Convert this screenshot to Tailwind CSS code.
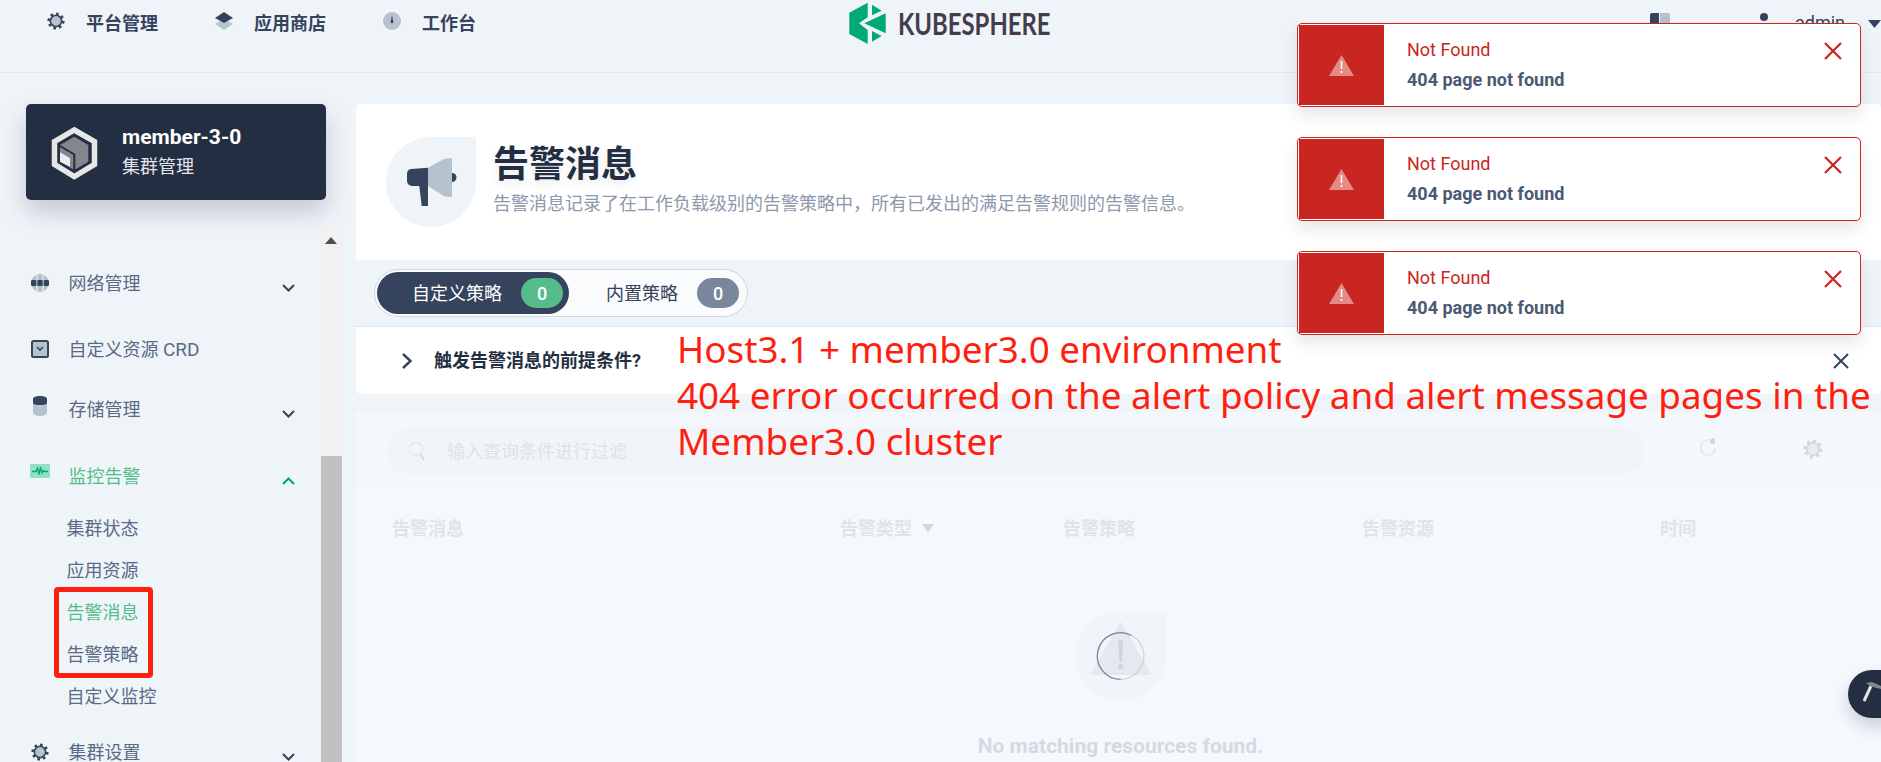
<!DOCTYPE html>
<html lang="zh">
<head>
<meta charset="utf-8">
<script src="https://cdn.jsdelivr.net/npm/@tailwindcss/browser@4"></script>
<title>告警消息</title>
</head>
<body class="font-['Roboto','Noto_Sans_CJK_SC',sans-serif]">
<div class="relative w-[1881px] h-[762px] overflow-hidden bg-[#eff4f9] text-[#36435c]">

  <!-- top nav -->
  <header class="relative h-[73px] border-b border-[#e3e9ef]">
    <nav class="flex pl-[47px] pt-[12px] font-bold text-[18px] leading-[24px]">
      <a class="flex w-[168px]">
        <svg class="w-[18px] h-[18px]" viewBox="0 0 18 18"><circle cx="9" cy="9" r="4.5" fill="#b6c2cd"/><circle cx="9" cy="9" r="5.6" fill="none" stroke="#36435c" stroke-width="1.8"/><circle cx="9" cy="9" r="7.3" fill="none" stroke="#36435c" stroke-width="2.6" stroke-dasharray="2.6 3.1"/></svg>
        <span class="ml-[21px] h-[24px]">平台管理</span>
      </a>
      <a class="flex w-[168px]">
        <svg class="w-[18px] h-[18px]" viewBox="0 0 18 18"><path d="M9 7 18 12 9 18 0 12Z" fill="#b6c2cd"/><path d="M9 0 18 6 9 11 0 6Z" fill="#36435c"/></svg>
        <span class="ml-[21px]">应用商店</span>
      </a>
      <a class="flex">
        <svg class="w-[18px] h-[18px]" viewBox="0 0 18 18"><circle cx="9" cy="9" r="9" fill="#b6c2cd"/><path d="M9 3.2 10.2 9.5a1.3 1.3 0 1 1-2.4 0Z" fill="#36435c"/></svg>
        <span class="ml-[21px]">工作台</span>
      </a>
    </nav>

    <!-- logo -->
    <div class="absolute left-[849px] top-[2px] flex items-center">
      <svg class="w-[37px] h-[42px]" viewBox="0 0 37 42"><path d="M18.700.7.3 10.700V32L18.700 42V28L10 21.300 18.700 15.300Z" fill="#00aa72"/><path d="M23 2.700 32.700 8.700 23 13.300Z M36.700 11.300V31.300L15.300 21.300Z M23 29 32.700 34 23 39.700Z" fill="#00aa72"/></svg>
      <span class="ml-[12px] font-['Lato',sans-serif] font-bold text-[31px] leading-[42px] text-[#453c4d] origin-left scale-x-[0.77] inline-block">KUBESPHERE</span>
    </div>

    <!-- right tools -->
    <div class="absolute left-[1650px] top-[13px] flex">
      <div class="w-[9px] h-[20px] bg-[#36435c] rounded-tl-[2px]"></div>
      <div class="w-[10px] h-[20px] bg-[#b6c2cd] ml-[1px] rounded-tr-[2px]"></div>
    </div>
    <div class="absolute left-[1760px] top-[13px] w-[8px] h-[8px] rounded-full bg-[#36435c]"></div>
    <span class="absolute left-[1795px] top-[11px] text-[18px] leading-[24px]">admin</span>
    <svg class="absolute left-[1868px] top-[20px] w-[13px] h-[8px]" viewBox="0 0 13 8"><path d="M0 0H13L6.500 8Z" fill="#36435c"/></svg>
  </header>

  <div class="flex">
    <!-- sidebar -->
    <aside class="relative w-[356px] h-[689px] shrink-0">
      <div class="ml-[26px] mt-[31px] w-[300px] h-[96px] rounded-[5px] bg-[#242e42] shadow-[0_12px_24px_rgba(36,46,66,0.22)] flex items-start pl-[25px] text-white">
        <svg class="w-[47px] h-[53px] mt-[23px]" viewBox="0 0 47 53"><path d="M23.300 3 43.500 14.600V37.400L23.300 49.500 3.500 37.400V14.600Z" fill="none" stroke="#e6e6e6" stroke-width="5.500"/><path d="M23.300 9.700 37.300 18V34.700L23.300 43 9 34.700V18Z" fill="#82868f"/><path d="M9 25.300 19 31.300V39.700L9 34.700Z" fill="#eee"/><path d="M9 19 23.300 27.500V43" fill="none" stroke="#242e42" stroke-width="2"/></svg>
        <div class="ml-[24px] mt-[19px]">
          <div class="font-bold text-[21px] leading-[28px]">member-3-0</div>
          <div class="text-[18px] leading-[24px] mt-[4px] text-[#e4e6ea]">集群管理</div>
        </div>
      </div>

      <!-- scrollbar -->
      <div class="absolute left-[320px] top-[157px] bottom-0 w-[23px] bg-[#f1f1f1]">
        <svg class="absolute left-[5px] top-[7px] w-[12px] h-[7px]" viewBox="0 0 12 7"><path d="M0 7 6 0 12 7Z" fill="#505050"/></svg>
        <div class="absolute left-[1px] right-[1px] top-[226px] bottom-0 bg-[#c1c1c1]"></div>
      </div>

      <!-- menu -->
      <ul class="absolute left-0 top-[190px] w-[320px] text-[18px] leading-[42px] text-[#5a6a86]">
        <li class="relative flex h-[42px] pl-[68.500px]">
          <svg class="absolute left-[31px] top-[11px] w-[18px] h-[18px]" viewBox="0 0 18 18"><circle cx="9" cy="9" r="9" fill="#b6c2cd"/><path d="M6 0V18M12 0V18" stroke="#eff4f9" stroke-width="1"/><path d="M0 6H18V12H0Z" fill="#eff4f9"/><rect y="6" width="5.500" height="6" rx="1" fill="#36435c"/><rect x="6.300" y="6" width="5.400" height="6" fill="#36435c"/><rect x="12.500" y="6" width="5.500" height="6" rx="1" fill="#36435c"/></svg>
          <span>网络管理</span>
          <svg class="absolute left-[282px] top-[21px] w-[13px] h-[8px]" viewBox="0 0 13 8"><path d="M1 1 6.500 6.500 12 1" fill="none" stroke="#36435c" stroke-width="2"/></svg>
        </li>
        <li class="relative flex h-[42px] pl-[68.500px] mt-[24px]">
          <svg class="absolute left-[31px] top-[11px] w-[18px] h-[18px]" viewBox="0 0 18 18"><rect x="1" y="1" width="16" height="16" rx="1.500" fill="#b6c2cd" stroke="#36435c" stroke-width="2"/><path d="M6 7 9 10 12 7" fill="none" stroke="#36435c" stroke-width="1.600"/></svg>
          <span>自定义资源 <span class="text-[19px]">CRD</span></span>
        </li>
        <li class="relative flex h-[42px] pl-[68.500px] mt-[18px]">
          <svg class="absolute left-[33px] top-[7px] w-[14px] h-[20px]" viewBox="0 0 14 20"><path d="M0 4H14V17C14 19 10 20 7 20S0 19 0 17Z" fill="#b6c2cd"/><path d="M0 3C0 1 3 0 7 0S14 1 14 3V7C14 8.500 11 9 7 9S0 8.500 0 7Z" fill="#36435c"/></svg>
          <span>存储管理</span>
          <svg class="absolute left-[282px] top-[21px] w-[13px] h-[8px]" viewBox="0 0 13 8"><path d="M1 1 6.500 6.500 12 1" fill="none" stroke="#36435c" stroke-width="2"/></svg>
        </li>
        <li class="relative flex h-[42px] pl-[68.500px] mt-[25px] text-[#55bc8a]">
          <svg class="absolute left-[30px] top-[8px] w-[20px] h-[14px]" viewBox="0 0 20 14"><rect width="20" height="14" rx="1.500" fill="#90e0c5"/><path d="M2 7.500H6L7.500 4 9 10.500 10.500 3 12 9 13.500 6.500 14.500 7.500H18" fill="none" stroke="#00aa72" stroke-width="1.300"/></svg>
          <span>监控告警</span>
          <svg class="absolute left-[282px] top-[21px] w-[13px] h-[8px]" viewBox="0 0 13 8"><path d="M1 7 6.500 1.500 12 7" fill="none" stroke="#00aa72" stroke-width="2"/></svg>
        </li>
        <li class="h-[42px] pl-[66.500px] mt-[10px]">集群状态</li>
        <li class="h-[42px] pl-[66.500px]">应用资源</li>
        <li class="h-[42px] pl-[66.500px] text-[#55bc8a]">告警消息</li>
        <li class="h-[42px] pl-[66.500px]">告警策略</li>
        <li class="h-[42px] pl-[66.500px]">自定义监控</li>
        <li class="relative flex h-[42px] pl-[68.500px] mt-[14px]">
          <svg class="absolute left-[31px] top-[11px] w-[18px] h-[18px]" viewBox="0 0 18 18"><circle cx="9" cy="9" r="4.500" fill="#b6c2cd"/><circle cx="9" cy="9" r="5.600" fill="none" stroke="#36435c" stroke-width="1.800"/><circle cx="9" cy="9" r="7.300" fill="none" stroke="#36435c" stroke-width="2.600" stroke-dasharray="2.600 3.100"/></svg>
          <span>集群设置</span>
          <svg class="absolute left-[282px] top-[21px] w-[13px] h-[8px]" viewBox="0 0 13 8"><path d="M1 1 6.500 6.500 12 1" fill="none" stroke="#36435c" stroke-width="2"/></svg>
        </li>
      </ul>
    </aside>

    <!-- main -->
    <main class="flex-1 min-w-0 pt-[31px]">
      <section class="h-[156px] bg-white rounded-t-[5px] flex items-start pl-[30px] pt-[33px]">
        <div class="w-[90px] h-[90px] rounded-full rounded-tr-none bg-[#eff4f9] flex items-center justify-center">
          <svg class="w-[90px] h-[90px]" viewBox="0 0 90 90"><path d="M66 36a4.500 4.500 0 0 1 0 9Z" fill="#36435c"/><path d="M42 30.700 58 22q3-.7 8-.7V60q-5 0-8-.7L42 49Z" fill="#b6c2cd"/><path d="M42 30.700V69H35.700L33.300 49H26a5 5 0 0 1-5-5V37a5 5 0 0 1 4-5Z" fill="#36435c"/></svg>
        </div>
        <div class="ml-[17px]">
          <h1 class="font-bold text-[36px] leading-[46px] text-[#242e42] mt-[5px] [text-shadow:0_4px_8px_rgba(36,46,66,0.1)]">告警消息</h1>
          <p class="text-[18px] leading-[24px] mt-[4px] text-[#8c98ad]">告警消息记录了在工作负载级别的告警策略中，所有已发出的满足告警规则的告警信息。</p>
        </div>
      </section>

      <div class="h-[67px] pl-[18px] pt-[9px] border-b border-[#dfe6ee]">
        <div class="w-[374px] h-[48px] rounded-full border border-[#cfd6e0] bg-[#f9fbfd] p-[2px] flex text-[18px]">
          <div class="w-[192px] h-[42px] rounded-full bg-[#36435c] text-white flex items-center pl-[35px]">
            <span>自定义策略</span>
            <span class="ml-[19px] w-[42px] h-[30px] rounded-full bg-[#55bc8a] flex items-center justify-center font-medium">0</span>
          </div>
          <div class="h-[42px] flex items-center pl-[37px]">
            <span>内置策略</span>
            <span class="ml-[19px] w-[42px] h-[30px] rounded-full bg-[#79879c] text-white flex items-center justify-center font-medium">0</span>
          </div>
        </div>
      </div>

      <section class="relative h-[67px] bg-white rounded-b-[5px] flex items-center pl-[45px]">
        <svg class="w-[12px] h-[18px]" viewBox="0 0 12 18"><path d="M2 2 9.500 9 2 16" fill="none" stroke="#36435c" stroke-width="2.400"/></svg>
        <span class="ml-[21px] font-bold text-[18px] text-[#242e42]">触发告警消息的前提条件?</span>
        <svg class="absolute left-[1476px] top-[25px] w-[18px] h-[18px]" viewBox="0 0 18 18"><path d="M2 2 16 16M16 2 2 16" stroke="#36435c" stroke-width="2"/></svg>
      </section>

      <section class="mt-[18px] h-[350px] bg-[#f5f8fd] rounded-t-[5px]">
        <div class="h-[78px] bg-[#f4f7fb] pl-[31px] pr-[237px] pt-[15px] relative">
          <div class="h-[48px] rounded-full bg-[#f1f5f9] flex items-center pl-[20px] text-[18px] text-[#dde2ea]">
            <svg class="w-[20px] h-[22px]" viewBox="0 0 20 22"><circle cx="9" cy="9" r="6.500" fill="none" stroke="#e5e9ef" stroke-width="1.600"/><path d="M13.500 14 17 20" stroke="#d5dbe3" stroke-width="2"/></svg>
            <span class="ml-[20px]">输入查询条件进行过滤</span>
          </div>
          <svg class="absolute left-[1342px] top-[26px] w-[20px] h-[20px]" viewBox="0 0 20 20"><path d="M15.500 4.500A7.500 7.500 0 1 0 17.500 10" fill="none" stroke="#e6eaef" stroke-width="2"/><path d="M13 1 16.500 0 17 6 12 5Z" fill="#ced4dd"/></svg>
          <svg class="absolute left-[1447px] top-[27px] w-[20px] h-[20px]" viewBox="0 0 18 18"><circle cx="9" cy="9" r="4.500" fill="#e8ecf2"/><circle cx="9" cy="9" r="5.600" fill="none" stroke="#d3d8e0" stroke-width="1.800"/><circle cx="9" cy="9" r="7.300" fill="none" stroke="#d3d8e0" stroke-width="2.600" stroke-dasharray="2.600 3.100"/></svg>
        </div>
        <div class="flex items-center h-[76px] pl-[36px] font-bold text-[18px] text-[#e0e4ea]">
          <span class="w-[448px]">告警消息</span>
          <span class="w-[223px] flex items-center">告警类型<svg class="ml-[9px] w-[14px] h-[9px]" viewBox="0 0 14 9"><path d="M1 0H13L7 9Z" fill="#d3d8e0"/></svg></span>
          <span class="w-[299px]">告警策略</span>
          <span class="w-[298px]">告警资源</span>
          <span>时间</span>
        </div>
        <div class="flex flex-col items-center w-[1053px] ml-[238px] pt-[45px]">
          <div class="relative w-[90px] h-[90px] rounded-full rounded-tr-none bg-[#f1f4f8]">
            <svg class="absolute left-0 top-0 w-[90px] h-[90px]" viewBox="0 0 90 90"><path d="M44.700 10.700 75.700 64H14Z" fill="#e5e8ee"/><path d="M44.700 68.300A23.300 23.300 0 0 0 55.700 24.500" fill="none" stroke="#cdd2da" stroke-width="1.200"/><path d="M55.700 24.500A23.300 23.300 0 1 0 44.700 68.300" fill="none" stroke="#77839a" stroke-width="1.300"/><path d="M42.200 29H47.200L46 50.700H43.400Z" fill="#cfd4dc"/><circle cx="44.700" cy="55.700" r="2.600" fill="#cfd4dc"/></svg>
          </div>
          <p class="mt-[29px] font-bold text-[21px] leading-[32px] text-[#d5dae2]">No matching resources found.</p>
        </div>
      </section>
    </main>
  </div>

  <!-- floating tool button -->
  <div class="absolute left-[1848px] top-[670px] w-[60px] h-[48px] rounded-l-[24px] bg-[#242e42] shadow-[0_8px_16px_rgba(36,46,66,0.2)]">
    <svg class="absolute left-[15px] top-[11px] w-[18px] h-[22px]" viewBox="0 0 18 22"><path d="M1 20 8 5" stroke="#e6e6e6" stroke-width="3"/><path d="M3 2 9 1 18 5V8L8 5.500Z" fill="#82868f"/></svg>
  </div>

  <!-- red highlight around menu items -->
  <div class="absolute left-[54px] top-[587px] w-[99px] h-[91px] border-[5px] border-[#fe1f10] rounded-[4px]"></div>

  <!-- annotation -->
  <div class="absolute left-[677px] top-[326px] font-['Noto_Sans',sans-serif] text-[36.800px] leading-[46px] text-[#ff1f10] whitespace-nowrap">
    <p>Host3.1 + member3.0 environment</p>
    <p>404 error occurred on the alert policy and alert message pages in the</p>
    <p>Member3.0 cluster</p>
  </div>

  <!-- notifications -->
  <div class="absolute left-[1297px] top-[23px] flex flex-col gap-[30px] w-[564px]">
    <div class="relative flex h-[84px] rounded-[5px] border border-[#ca2621] bg-white overflow-hidden shadow-[0_8px_16px_rgba(36,46,66,0.12)]">
      <div class="w-[85px] ml-[1px] my-[1px] bg-[#ca2621] flex items-center justify-center">
        <svg class="w-[25px] h-[21px]" viewBox="0 0 25 21"><path d="M12.500 0 25 21H0Z" fill="#e58a85"/><path d="M11.700 6H13.300V14H11.700ZM11.700 16H13.300V18H11.700Z" fill="#fff"/></svg>
      </div>
      <div class="ml-[23px] pt-[14px]">
        <div class="text-[#ca2621] text-[18px] leading-[24px]">Not Found</div>
        <div class="text-[#4a5974] font-bold text-[18px] leading-[24px] mt-[6px]">404 page not found</div>
      </div>
      <svg class="absolute right-[18px] top-[18px] w-[18px] h-[18px]" viewBox="0 0 18 18"><path d="M1 1 17 17M17 1 1 17" stroke="#ca2621" stroke-width="2.200"/></svg>
    </div>
    <div class="relative flex h-[84px] rounded-[5px] border border-[#ca2621] bg-white overflow-hidden shadow-[0_8px_16px_rgba(36,46,66,0.12)]">
      <div class="w-[85px] ml-[1px] my-[1px] bg-[#ca2621] flex items-center justify-center">
        <svg class="w-[25px] h-[21px]" viewBox="0 0 25 21"><path d="M12.500 0 25 21H0Z" fill="#e58a85"/><path d="M11.700 6H13.300V14H11.700ZM11.700 16H13.300V18H11.700Z" fill="#fff"/></svg>
      </div>
      <div class="ml-[23px] pt-[14px]">
        <div class="text-[#ca2621] text-[18px] leading-[24px]">Not Found</div>
        <div class="text-[#4a5974] font-bold text-[18px] leading-[24px] mt-[6px]">404 page not found</div>
      </div>
      <svg class="absolute right-[18px] top-[18px] w-[18px] h-[18px]" viewBox="0 0 18 18"><path d="M1 1 17 17M17 1 1 17" stroke="#ca2621" stroke-width="2.200"/></svg>
    </div>
    <div class="relative flex h-[84px] rounded-[5px] border border-[#ca2621] bg-white overflow-hidden shadow-[0_8px_16px_rgba(36,46,66,0.12)]">
      <div class="w-[85px] ml-[1px] my-[1px] bg-[#ca2621] flex items-center justify-center">
        <svg class="w-[25px] h-[21px]" viewBox="0 0 25 21"><path d="M12.500 0 25 21H0Z" fill="#e58a85"/><path d="M11.700 6H13.300V14H11.700ZM11.700 16H13.300V18H11.700Z" fill="#fff"/></svg>
      </div>
      <div class="ml-[23px] pt-[14px]">
        <div class="text-[#ca2621] text-[18px] leading-[24px]">Not Found</div>
        <div class="text-[#4a5974] font-bold text-[18px] leading-[24px] mt-[6px]">404 page not found</div>
      </div>
      <svg class="absolute right-[18px] top-[18px] w-[18px] h-[18px]" viewBox="0 0 18 18"><path d="M1 1 17 17M17 1 1 17" stroke="#ca2621" stroke-width="2.200"/></svg>
    </div>
  </div>
</div>
</body>
</html>
